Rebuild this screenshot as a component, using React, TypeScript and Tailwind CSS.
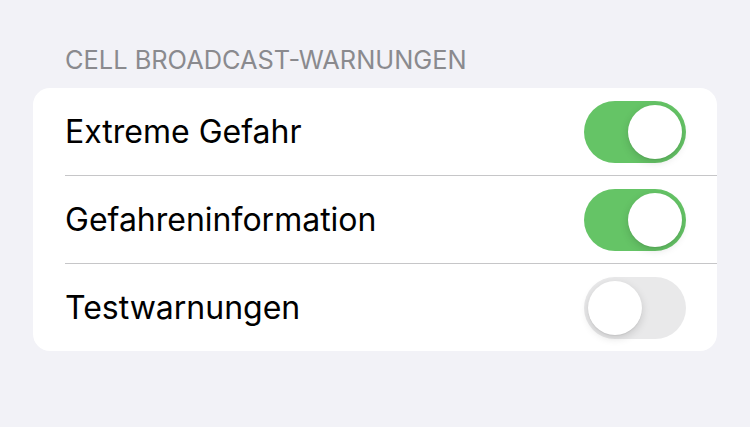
const rows = [
  { label: "Extreme Gefahr", on: true },
  { label: "Gefahreninformation", on: true },
  { label: "Testwarnungen", on: false },
];

function Toggle({ on }: { on: boolean }) {
  return (
    <div
      className={`flex h-[62px] w-[102px] shrink-0 items-center rounded-full p-[4px] ${
        on ? "justify-end bg-[#65c466]" : "justify-start bg-[#e9e9ea]"
      }`}
    >
      <div className="h-[54px] w-[54px] rounded-full bg-white shadow-[0_3px_8px_rgba(0,0,0,0.15),0_1px_1px_rgba(0,0,0,0.06)]" />
    </div>
  );
}

export default function App() {
  return (
    <div
      className="flex h-[427px] w-[750px] flex-col bg-[#f2f2f7] px-[33px] pt-[45px]"
      style={{ fontFamily: "Inter, 'Liberation Sans', sans-serif" }}
    >
      {/* section header */}
      <div className="px-[32px] pb-[13px] text-[25.4px] leading-[30px] text-[#8a8a8e]">
        CELL BROADCAST-WARNUNGEN
      </div>
      {/* grouped list */}
      <div className="flex flex-col rounded-[17px] bg-white">
        {rows.map((r, i) => (
          <div key={r.label} className="flex flex-col pl-[32px]">
            {i > 0 && <div className="h-px bg-[#c6c6c8]" />}
            <div className="flex h-[87px] items-center justify-between pr-[31px]">
              <span className="text-[32px] leading-none text-black">{r.label}</span>
              <Toggle on={r.on} />
            </div>
          </div>
        ))}
      </div>
    </div>
  );
}
